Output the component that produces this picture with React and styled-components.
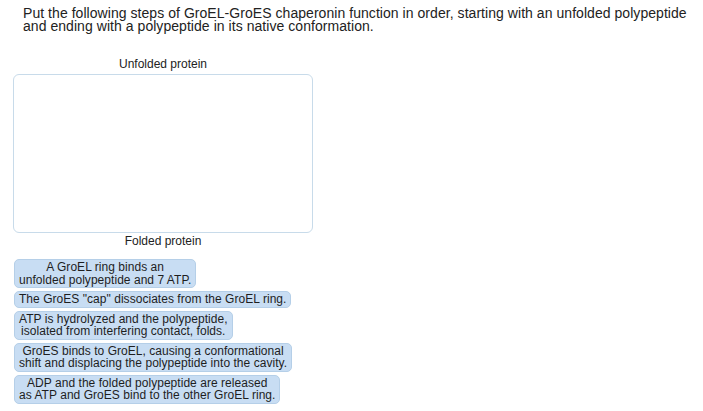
import React from 'react';
import styled, { createGlobalStyle } from 'styled-components';

const GlobalStyle = createGlobalStyle`
  body {
    margin: 0;
    background: #fff;
    font-family: 'Liberation Sans', Arial, sans-serif;
    color: #222;
  }
`;

const Page = styled.div`
  padding: 7px 0 0 0;
`;

const Prompt = styled.p`
  margin: 0 0 0 23px;
  width: 672px;
  font-size: 14px;
  letter-spacing: 0.05px;
  line-height: 13px;
`;

const Zone = styled.div`
  margin: 25px 0 0 13px;
  width: 300px;
  display: flex;
  flex-direction: column;
  align-items: center;
`;

const ZoneLabel = styled.div`
  font-size: 12px;
  line-height: 13px;
  padding: ${(p) => (p.bottom ? '2px 0 0' : '0 0 3px')};
`;

const DropBox = styled.div`
  box-sizing: border-box;
  width: 300px;
  height: 159px;
  border: 1px solid #c8dbea;
  border-radius: 6px;
  background: #fff;
`;

const Bank = styled.div`
  margin: 11px 0 0 14px;
  display: flex;
  flex-direction: column;
  align-items: flex-start;
  gap: 3px;
`;

const Chip = styled.div`
  box-sizing: border-box;
  background: #c8ddf3;
  border: 1px solid #b5cfe8;
  border-radius: 5px;
  padding: 1px 4px;
  font-size: 12px;
  line-height: 12.5px;
  letter-spacing: 0.04px;
  text-align: center;
  color: #1e1e1e;
`;

const steps = [
  ['A GroEL ring binds an', 'unfolded polypeptide and 7 ATP.'],
  ['The GroES "cap" dissociates from the GroEL ring.'],
  ['ATP is hydrolyzed and the polypeptide,', 'isolated from interfering contact, folds.'],
  ['GroES binds to GroEL, causing a conformational', 'shift and displacing the polypeptide into the cavity.'],
  ['ADP and the folded polypeptide are released', 'as ATP and GroES bind to the other GroEL ring.'],
];

export default function App() {
  return (
    <>
      <GlobalStyle />
      <Page>
        <Prompt>
          Put the following steps of GroEL-GroES chaperonin function in order, starting with an unfolded polypeptide
          and ending with a polypeptide in its native conformation.
        </Prompt>
        <Zone>
          <ZoneLabel>Unfolded protein</ZoneLabel>
          <DropBox />
          <ZoneLabel bottom>Folded protein</ZoneLabel>
        </Zone>
        <Bank>
          {steps.map((lines, i) => (
            <Chip key={i}>
              {lines.map((l, j) => (
                <div key={j}>{l}</div>
              ))}
            </Chip>
          ))}
        </Bank>
      </Page>
    </>
  );
}
